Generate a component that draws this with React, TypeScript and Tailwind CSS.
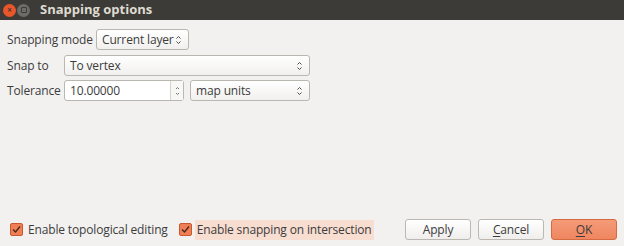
import React from "react";

const font = { fontFamily: '"Open Sans", "Noto Sans", sans-serif' };

const Arrows: React.FC = () => (
  <svg width="7" height="10" viewBox="0 0 7 10" className="shrink-0">
    <path d="M1.5 3.5 L3.5 1.5 L5.5 3.5" fill="none" stroke="#4c4c4c" strokeWidth="1" />
    <path d="M1.5 6.5 L3.5 8.5 L5.5 6.5" fill="none" stroke="#4c4c4c" strokeWidth="1" />
  </svg>
);

const Combo: React.FC<{ label: string; className?: string }> = ({ label, className }) => (
  <div
    className={`flex h-[21px] shrink-0 items-center justify-between rounded-[3px] border border-[#b9b7b0] bg-gradient-to-b from-[#ffffff] to-[#f1f0ee] pl-[5px] pr-[6px] text-[#3c3c3c] ${className ?? ""}`}
  >
    <span className="whitespace-nowrap">{label}</span>
    <Arrows />
  </div>
);

const Check: React.FC = () => (
  <span className="flex h-[13px] w-[13px] shrink-0 items-center justify-center rounded-[2px] border border-[#c9582e] bg-[#ef7f55]">
    <svg width="11" height="11" viewBox="0 0 11 11">
      <path d="M2 5.5 L4.5 8 L9 2.5" fill="none" stroke="#4a2a1c" strokeWidth="1.4" />
    </svg>
  </span>
);

const Button: React.FC<{ children: React.ReactNode; primary?: boolean }> = ({ children, primary }) => (
  <div
    className={`flex h-[21px] w-[66px] items-center justify-center rounded-[3px] border text-[#3c3c3c] ${
      primary
        ? "border-[#d66a41] bg-gradient-to-b from-[#f59a77] to-[#ef8660]"
        : "border-[#bab8b1] bg-gradient-to-b from-[#ffffff] to-[#efeeec]"
    }`}
  >
    {children}
  </div>
);

export default function App() {
  return (
    <div className="flex h-[246px] w-[624px] flex-col bg-[#f2f1f0]" style={font}>
      <div className="flex h-[20px] items-center bg-[#3c3b37] pl-[3px]">
        <span className="flex h-[13px] w-[13px] items-center justify-center rounded-full bg-[#e9562a] text-[8px] font-bold leading-none text-[#3c3b37]">
          ×
        </span>
        <span className="ml-[1px] flex h-[13px] w-[13px] items-center justify-center rounded-full bg-[#6d6c66]">
          <span className="h-[6px] w-[6px] rounded-[1px] border border-[#3c3b37]" />
        </span>
        <span className="ml-[10px] text-[13px] font-bold text-[#dfdbd2]">Snapping options</span>
      </div>

      <div className="flex flex-1 flex-col whitespace-nowrap px-[7px] pt-[9px] text-[12px] tracking-[-0.15px] text-[#3c3c3c]">
        <div className="flex items-center">
          <span className="w-[89px] shrink-0">Snapping mode</span>
          <Combo label="Current layer" className="w-[93px]" />
        </div>
        <div className="mt-[5px] flex items-center">
          <span className="w-[57px] shrink-0">Snap to</span>
          <Combo label="To vertex" className="w-[246px]" />
        </div>
        <div className="mt-[4px] flex items-center">
          <span className="w-[57px] shrink-0">Tolerance</span>
          <div className="flex h-[21px] w-[120px] shrink-0 rounded-[3px] border border-[#b9b7b0] bg-white">
            <span className="flex flex-1 items-center pl-[5px]">10.00000</span>
            <span className="flex w-[13px] items-center justify-center border-l border-[#d5d3ce] bg-[#f7f7f6]">
              <svg width="5" height="12" viewBox="0 0 5 12">
                <path d="M1 4 L2.5 2.5 L4 4" fill="none" stroke="#6a6a6a" strokeWidth="0.9" />
                <path d="M1 8 L2.5 9.5 L4 8" fill="none" stroke="#6a6a6a" strokeWidth="0.9" />
              </svg>
            </span>
          </div>
          <Combo label="map units" className="ml-[6px] w-[120px]" />
        </div>

        <div className="mt-auto mb-[6px] flex items-center">
          <div className="flex items-center pl-[3px]">
            <Check />
            <span className="ml-[5px]">Enable topological editing</span>
          </div>
          <div className="ml-[11px] flex items-center">
            <Check />
            <span className="ml-[3px] bg-[#f8ddd1] px-[2px] py-[1px]">Enable snapping on intersection</span>
          </div>
          <div className="ml-auto flex gap-[7px]">
            <Button>Apply</Button>
            <Button>
              <span>
                <span className="underline underline-offset-2">C</span>ancel
              </span>
            </Button>
            <Button primary>
              <span>
                <span className="underline underline-offset-2">O</span>K
              </span>
            </Button>
          </div>
        </div>
      </div>
    </div>
  );
}
